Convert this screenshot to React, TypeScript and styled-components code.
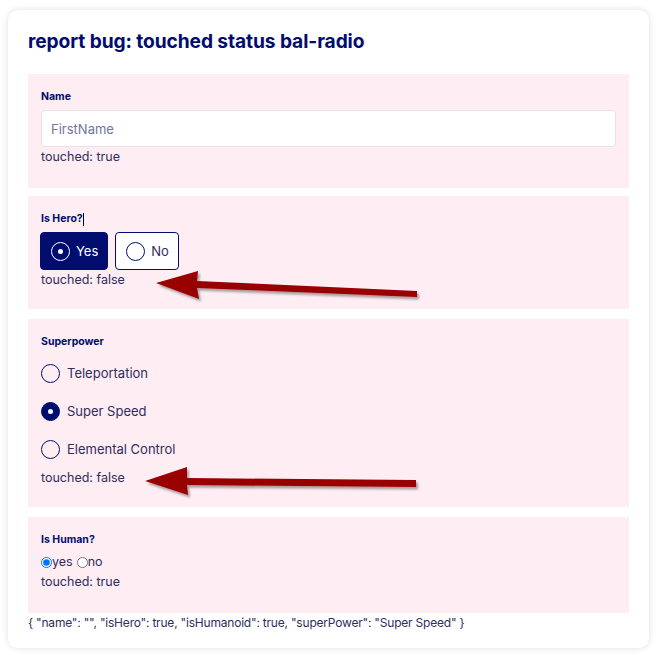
import React from "react";
import styled, { createGlobalStyle } from "styled-components";

const Global = createGlobalStyle`
  html, body { margin: 0; padding: 0; background: #ffffff; }
  body { font-family: Inter, "Noto Sans", sans-serif; color: #2f2d5e; }
  * { box-sizing: border-box; }
`;

const Page = styled.div`
  position: relative;
  width: 662px;
  height: 655px;
  padding: 10px 13px 0 8px;
`;

const Card = styled.div`
  width: 641px;
  height: 638px;
  background: #fff;
  border-radius: 10px;
  box-shadow: 0 0 7px rgba(0, 0, 0, 0.13);
  padding: 20px 20px 16px 20px;
  display: flex;
  flex-direction: column;
`;

const Title = styled.h1`
  margin: 0 0 22px 0;
  font-size: 19.2px;
  line-height: 22px;
  font-weight: 700;
  color: #000d6e;
  letter-spacing: -0.1px;
`;

const Section = styled.div<{ $pb?: number; $mb?: number }>`
  background: #feeef3;
  padding: 16px 13px ${(p) => p.$pb ?? 19}px 13px;
  margin-bottom: ${(p) => p.$mb ?? 10}px;
  display: flex;
  flex-direction: column;
  align-items: flex-start;
`;

const Label = styled.div<{ $gap?: number }>`
  font-size: 10.5px;
  line-height: 14px;
  font-weight: 700;
  color: #000d6e;
  margin-bottom: ${(p) => p.$gap ?? 6}px;
  display: flex;
  align-items: center;
`;

const Caret = styled.span`
  display: inline-block;
  width: 1px;
  height: 13px;
  background: #000;
`;

const Input = styled.input`
  width: 100%;
  height: 37px;
  border: 1px solid #e3e3e8;
  border-radius: 4px;
  background: #fff;
  padding: 0 9px;
  font-family: inherit;
  font-size: 13px;
  color: #2f2d5e;
  outline: none;
  &::placeholder { color: #7174a0; }
`;

const Touched = styled.div`
  font-size: 12.5px;
  line-height: 20px;
  color: #2f2d5e;
`;

const ButtonRow = styled.div`
  display: flex;
  gap: 7px;
  margin-left: -1px;
`;

const RadioButton = styled.div<{ $checked?: boolean }>`
  height: 38px;
  display: flex;
  align-items: center;
  gap: 6px;
  padding: 0 9px 0 10px;
  border-radius: 4px;
  border: 1px solid #000d6e;
  background: ${(p) => (p.$checked ? "#000d6e" : "#fff")};
  color: ${(p) => (p.$checked ? "#fff" : "#2f2d5e")};
  font-size: 13px;
`;

const Circle = styled.span<{ $checked?: boolean; $inverted?: boolean; $filled?: boolean }>`
  width: 19px;
  height: 19px;
  border-radius: 50%;
  flex: none;
  border: 1.5px solid ${(p) => (p.$inverted ? "#fff" : "#000d6e")};
  background: ${(p) => (p.$filled ? "#000d6e" : "transparent")};
  display: flex;
  align-items: center;
  justify-content: center;
  &::after {
    content: "";
    display: ${(p) => (p.$checked ? "block" : "none")};
    width: 5px;
    height: 5px;
    border-radius: 50%;
    background: #fff;
  }
`;

const RadioItem = styled.div`
  height: 38px;
  display: flex;
  align-items: center;
  gap: 7px;
  font-size: 13px;
  color: #2f2d5e;
`;

const NativeRow = styled.div`
  display: flex;
  align-items: center;
  font-size: 12.5px;
  line-height: 20px;
  color: #2f2d5e;
`;

const NativeRadio = styled.input`
  margin: 0;
  width: 11px;
  height: 11px;
`;

const NativeLabel = styled.label`
  display: flex;
  align-items: center;
  margin-right: 4px;
`;

const Json = styled.div`
  font-size: 12px;
  line-height: 20px;
  color: #2f2d5e;
  margin-top: -10px;
  letter-spacing: -0.2px;
`;

const Overlay = styled.svg`
  position: absolute;
  left: 0;
  top: 0;
  width: 662px;
  height: 655px;
  pointer-events: none;
`;

export default function App() {
  return (
    <>
      <Global />
      <Page>
        <Card>
          <Title>report bug: touched status bal-radio</Title>

          <Section $pb={21} $mb={8}>
            <Label>Name</Label>
            <Input placeholder="FirstName" readOnly />
            <Touched>touched: true</Touched>
          </Section>

          <Section>
            <Label>
              Is Hero?<Caret />
            </Label>
            <ButtonRow>
              <RadioButton $checked>
                <Circle $inverted $checked />
                Yes
              </RadioButton>
              <RadioButton>
                <Circle />
                No
              </RadioButton>
            </ButtonRow>
            <Touched>touched: false</Touched>
          </Section>

          <Section>
            <Label $gap={5}>Superpower</Label>
            <RadioItem>
              <Circle />
              Teleportation
            </RadioItem>
            <RadioItem>
              <Circle $filled $checked />
              Super Speed
            </RadioItem>
            <RadioItem>
              <Circle />
              Elemental Control
            </RadioItem>
            <Touched>touched: false</Touched>
          </Section>

          <Section $pb={21}>
            <Label $gap={5}>Is Human?</Label>
            <NativeRow>
              <NativeLabel>
                <NativeRadio type="radio" name="human" defaultChecked />
                yes
              </NativeLabel>
              <NativeLabel>
                <NativeRadio type="radio" name="human" />
                no
              </NativeLabel>
            </NativeRow>
            <Touched>touched: true</Touched>
          </Section>

          <Json>
            {'{ "name": "", "isHero": true, "isHumanoid": true, "superPower": "Super Speed" }'}
          </Json>
        </Card>

        <Overlay viewBox="0 0 662 655">
          <defs>
            <filter id="sh" x="-10%" y="-50%" width="130%" height="250%">
              <feDropShadow dx="2" dy="2.5" stdDeviation="1.2" floodColor="#000" floodOpacity="0.35" />
            </filter>
          </defs>
          <polygon
            points="156,283 198,271 197,281 417,291 417,297 197,288 199,299"
            fill="#990000"
            filter="url(#sh)"
          />
          <polygon
            points="145,481 187,467 187,478 416,480 416,487 187,485 188,495"
            fill="#990000"
            filter="url(#sh)"
          />
        </Overlay>
      </Page>
    </>
  );
}
